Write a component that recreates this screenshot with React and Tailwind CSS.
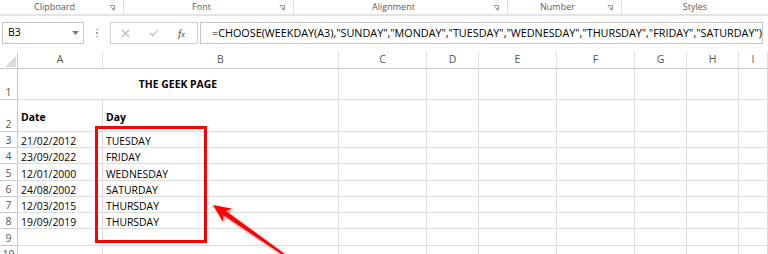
import React from 'react';

const COLS = 'grid grid-cols-[18px_85px_236px_88px_52px_78px_78px_52px_52px_29px]';
const LETTERS = ['A', 'B', 'C', 'D', 'E', 'F', 'G', 'H', 'I'];

const GROUPS = [
  { label: 'Clipboard', w: 'w-[124px]', launcher: true },
  { label: 'Font', w: 'w-[170px]', launcher: true },
  { label: 'Alignment', w: 'w-[214px]', launcher: true },
  { label: 'Number', w: 'w-[114px]', launcher: true },
  { label: 'Styles', w: 'flex-1', launcher: false },
];

const DATA = [
  { n: 3, h: 'h-[16px]', date: '21/02/2012', day: 'TUESDAY' },
  { n: 4, h: 'h-[16px]', date: '23/09/2022', day: 'FRIDAY' },
  { n: 5, h: 'h-[17px]', date: '12/01/2000', day: 'WEDNESDAY' },
  { n: 6, h: 'h-[16px]', date: '24/08/2002', day: 'SATURDAY' },
  { n: 7, h: 'h-[16px]', date: '12/03/2015', day: 'THURSDAY' },
  { n: 8, h: 'h-[16px]', date: '19/09/2019', day: 'THURSDAY' },
  { n: 9, h: 'h-[17px]', date: '', day: '' },
  { n: 10, h: 'h-[16px]', date: '', day: '' },
];

const FONT = { fontFamily: '"Open Sans", "Noto Sans", sans-serif' };

function Launcher() {
  return (
    <svg width="6" height="6" viewBox="0 0 6 6" className="absolute right-[8px] top-[5px]">
      <path d="M0.5 0.5 H5.5 V5.5" fill="none" stroke="#9a9a9a" strokeWidth="1" />
      <path d="M1.5 1.5 L4.5 4.5 M2.5 4.5 H4.5 V2.5" fill="none" stroke="#9a9a9a" strokeWidth="0.9" />
    </svg>
  );
}

function RowNum({ n }) {
  return (
    <div className="flex items-end justify-center border-r border-b border-[#c8c8c8] text-[10.5px] leading-[13px] text-[#555]">
      {n}
    </div>
  );
}

function Cell({ children, className = '' }) {
  return (
    <div className={`border-r border-b border-[#dcdcdc] flex items-end pl-[3px] text-[10.4px] leading-[12px] text-black whitespace-nowrap ${className}`}>
      {children}
    </div>
  );
}

export default function App() {
  return (
    <div className="relative w-[768px] h-[254px] overflow-hidden bg-white" style={FONT}>
      {/* ribbon group labels */}
      <div className="flex h-[16px] border-b-2 border-[#e4e4e4]">
        {GROUPS.map((g, i) => (
          <div
            key={g.label}
            className={`relative ${g.w} h-[14px] flex items-center justify-center ${g.launcher ? 'pr-[14px]' : ''} ${i < GROUPS.length - 1 ? 'border-r border-[#dedede]' : ''}`}
          >
            <span className="text-[9px] leading-[12px] text-[#5a5a5a]">{g.label}</span>
            {g.launcher && <Launcher />}
          </div>
        ))}
      </div>

      {/* formula bar */}
      <div className="flex items-center h-[22px] mt-[6px]">
        <div className="ml-[2px] w-[82px] h-[22px] border border-[#c6c6c6] flex items-center justify-between pl-[5px] pr-[4px]">
          <span className="text-[10.5px] text-black">B3</span>
          <svg width="7" height="4" viewBox="0 0 7 4">
            <path d="M0 0 H7 L3.5 4 Z" fill="#7a7a7a" />
          </svg>
        </div>
        <div className="w-[26px] flex flex-col items-center gap-[2px]">
          <span className="w-[1.5px] h-[1.5px] bg-[#a8a8a8]" />
          <span className="w-[1.5px] h-[1.5px] bg-[#a8a8a8]" />
          <span className="w-[1.5px] h-[1.5px] bg-[#a8a8a8]" />
        </div>
        <div className="w-[88px] h-[22px] border border-[#d0d0d0] flex items-center">
          <svg width="9" height="9" viewBox="0 0 9 9" className="ml-[10px]">
            <path d="M1 1 L8 8 M8 1 L1 8" stroke="#b8b8b8" strokeWidth="1.1" />
          </svg>
          <svg width="10" height="8" viewBox="0 0 10 8" className="ml-[19px]">
            <path d="M1 4 L3.8 7 L9 1" fill="none" stroke="#b8b8b8" strokeWidth="1.1" />
          </svg>
          <span
            className="ml-[19px] text-[11px] italic text-[#444]"
            style={{ fontFamily: '"Liberation Serif", serif' }}
          >
            f<span className="text-[9px]">x</span>
          </span>
        </div>
        <div className="ml-[2px] w-[563px] h-[22px] border border-[#c6c6c6] flex items-center pl-[11px] whitespace-nowrap overflow-hidden">
          <span className="text-[10.8px] text-black">
            =CHOOSE(WEEKDAY(A3),"SUNDAY","MONDAY","TUESDAY","WEDNESDAY","THURSDAY","FRIDAY","SATURDAY")
          </span>
        </div>
      </div>

      {/* sheet */}
      <div className="mt-[8px]">
        {/* column headers */}
        <div className={`${COLS} h-[16px]`}>
          <div className="relative border-r border-b border-[#c8c8c8]">
            <svg width="11" height="11" viewBox="0 0 11 11" className="absolute right-[1px] bottom-[1px]">
              <path d="M11 0 V11 H0 Z" fill="#dadada" />
            </svg>
          </div>
          {LETTERS.map((l) => (
            <div key={l} className="flex items-center justify-center border-r border-b border-[#c8c8c8] border-r-[#e0e0e0] text-[10.5px] text-[#555]">
              {l}
            </div>
          ))}
        </div>

        {/* row 1 */}
        <div className={`${COLS} h-[32px]`}>
          <RowNum n={1} />
          <Cell className="col-span-2 !items-center justify-center font-bold !pl-0">THE GEEK PAGE</Cell>
          {Array.from({ length: 7 }).map((_, i) => <Cell key={i} />)}
        </div>

        {/* row 2 */}
        <div className={`${COLS} h-[32px]`}>
          <RowNum n={2} />
          <Cell className="!items-center pt-[2px] font-bold">Date</Cell>
          <Cell className="!items-center pt-[2px] font-bold">Day</Cell>
          {Array.from({ length: 7 }).map((_, i) => <Cell key={i} />)}
        </div>

        {DATA.map((r) => (
          <div key={r.n} className={`${COLS} ${r.h}`}>
            <RowNum n={r.n} />
            <Cell>{r.date}</Cell>
            <Cell>{r.day}</Cell>
            {Array.from({ length: 7 }).map((_, i) => <Cell key={i} />)}
          </div>
        ))}
      </div>

      {/* red highlight box */}
      <div className="absolute left-[95px] top-[126px] w-[112px] h-[117px] border-[3px] border-[#ff0000]" />

      {/* arrow */}
      <svg className="absolute left-[195px] top-[190px] overflow-visible" width="110" height="80" viewBox="0 0 110 80">
        <defs>
          <filter id="sh" x="-20%" y="-20%" width="140%" height="140%">
            <feDropShadow dx="1.5" dy="1.5" stdDeviation="1.2" floodColor="#000" floodOpacity="0.45" />
          </filter>
        </defs>
        <polygon
          points="18,15 37.3,18.7 30.9,21 96.3,68.7 95.3,70.1 28.1,25 28.1,31.9"
          fill="#ff0000"
          filter="url(#sh)"
        />
      </svg>
    </div>
  );
}
